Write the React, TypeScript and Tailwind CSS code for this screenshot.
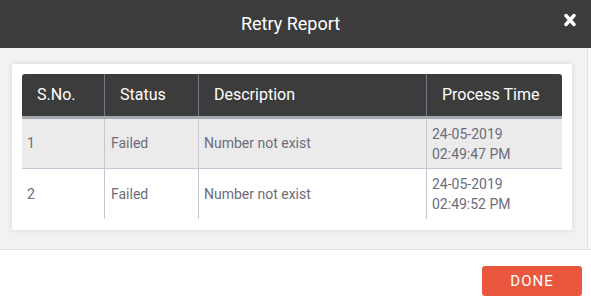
import React from "react";

const rows = [
  { n: "1", status: "Failed", desc: "Number not exist", date: "24-05-2019", time: "02:49:47 PM", bg: "bg-[#ebebeb]" },
  { n: "2", status: "Failed", desc: "Number not exist", date: "24-05-2019", time: "02:49:52 PM", bg: "bg-white" },
];

export default function App() {
  return (
    <div className="w-[591px] h-[306px] bg-white flex flex-col overflow-hidden" style={{ fontFamily: "Roboto, 'Liberation Sans', sans-serif" }}>
      <div className="h-[48px] bg-[#3c3c3c] relative flex items-center justify-center pr-[10px] shrink-0">
        <span className="text-white text-[18px] leading-none">Retry Report</span>
        <svg className="absolute right-[15px] top-[13px]" width="12" height="14" viewBox="0 0 12 14">
          <path d="M2 2.5 L10 11.5 M10 2.5 L2 11.5" stroke="white" strokeWidth="3.4" strokeLinecap="round" />
        </svg>
      </div>
      <div className="h-[202px] bg-[#f2f2f2] border-b border-[#dedede] flex shrink-0">
        <div className="flex-1 pt-[16px] pl-[12px] pr-[15px]">
          <div className="bg-white h-[166px] px-[10px] pt-[10px] shadow-[0_0_6px_rgba(0,0,0,0.12)]">
            <div className="grid grid-cols-[82px_94px_228px_136px] h-[42px] bg-[#3c3c3c] rounded-tl-[3px] rounded-tr-[3px] border-b-[3px] border-[#a2a9b1] box-content">
              {["S.No.", "Status", "Description", "Process Time"].map((h, i) => (
                <div key={h} className={`flex items-center pl-[15px] text-white text-[16px] ${i > 0 ? "border-l border-[#6f7a8a]" : ""}`}>{h}</div>
              ))}
            </div>
            {rows.map((r, idx) => (
              <div key={r.n} className={`grid grid-cols-[82px_94px_228px_136px] h-[50px] ${r.bg} ${idx === 0 ? "border-b border-[#c6c6d6]" : ""} text-[14px] text-[#6c6c7c]`}>
                <div className="flex items-center pl-[5px]">{r.n}</div>
                <div className="flex items-center pl-[6px] border-l border-[#c6c6d6]">{r.status}</div>
                <div className="flex items-center pl-[5px] border-l border-[#c6c6d6]">{r.desc}</div>
                <div className="flex flex-col justify-center pl-[5px] border-l border-[#c6c6d6] leading-[20px]">
                  <span>{r.date}</span>
                  <span>{r.time}</span>
                </div>
              </div>
            ))}
          </div>
        </div>
        <div className="w-[4px] bg-[#f7f7f7] border-l border-[#e2e2e2]" />
      </div>
      <div className="flex-1 flex justify-end items-start pt-[16px] pr-[9px]">
        <button className="w-[100px] h-[30px] bg-[#e9573f] rounded-[3px] text-white text-[15px] tracking-[1px]">DONE</button>
      </div>
    </div>
  );
}
